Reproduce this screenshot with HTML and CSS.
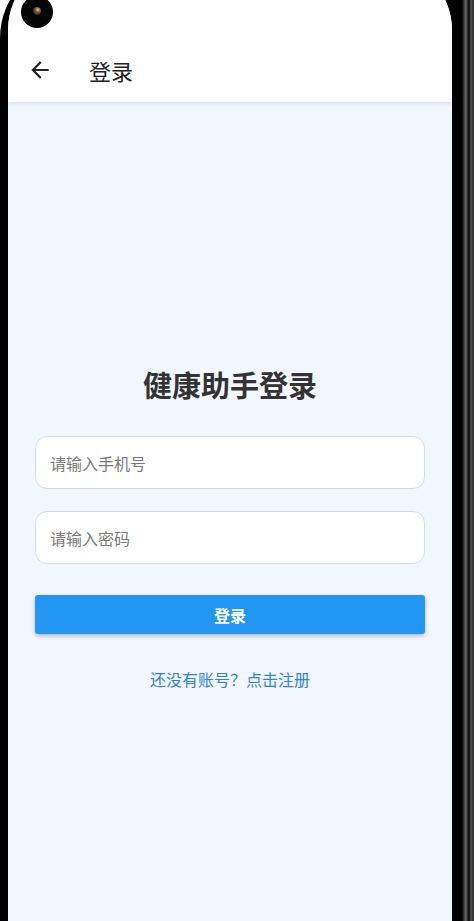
FILE: index.html
```html
<!DOCTYPE html>
<html lang="zh-CN">
<head>
<meta charset="utf-8">
<title>登录</title>
<link rel="stylesheet" href="styles.css">
</head>
<body>
<div class="phone">
  <div class="screen">
    <header class="header">
      <div class="bar">
        <svg class="back" viewBox="0 0 24 24" aria-hidden="true"><path d="M20 11H7.83l5.59-5.59L12 4l-8 8 8 8 1.41-1.41L7.83 13H20v-2z"/></svg>
        <span class="bar-title">登录</span>
      </div>
    </header>
    <main class="content">
      <h1 class="title">健康助手登录</h1>
      <input class="field" type="text" placeholder="请输入手机号">
      <input class="field field-second" type="password" placeholder="请输入密码">
      <button class="btn" type="button">登录</button>
      <a class="link" href="#">还没有账号？点击注册</a>
    </main>
  </div>
  <div class="camera"><div class="lens"></div></div>
</div>
</body>
</html>
```
FILE: styles.css
```css
* { box-sizing: border-box; }
html, body {
  margin: 0;
  padding: 0;
  background: #ffffff;
  overflow: hidden;
  font-family: "Noto Sans CJK SC", "Noto Sans", sans-serif;
}
.phone {
  position: relative;
  margin-top: -39px;
  width: 474px;
  height: 980px;
  padding: 0 22px 0 8px;
  border-top-left-radius: 77px;
  background: linear-gradient(90deg, #000 0, #000 calc(100% - 12px), #3a3a3a calc(100% - 10px), #6a6a6a calc(100% - 8px), #1a1a1a calc(100% - 6px), #0a0a0a calc(100% - 5px), #555 calc(100% - 3px), #222 100%);
}
.screen {
  height: 100%;
  background: #f2f6fe;
  border-radius: 69px 69px 0 0;
  overflow: hidden;
}
.header {
  height: 141px;
  padding-top: 77px;
  background: #ffffff;
  box-shadow: 0 1px 4px rgba(0, 0, 0, 0.12);
  position: relative;
}
.bar {
  height: 64px;
  display: flex;
  align-items: center;
  padding-left: 19px;
}
.back {
  width: 26px;
  height: 26px;
  fill: #222;
}
.bar-title {
  margin-left: 36px;
  font-size: 22px;
  color: #222;
  line-height: 30px;
}
.content {
  display: flex;
  flex-direction: column;
  align-items: center;
  padding-top: 264px;
}
.title {
  margin: 0;
  font-size: 29px;
  font-weight: 700;
  line-height: 36px;
  color: #333;
}
.field {
  margin-top: 34px;
  width: 390px;
  height: 53px;
  border: 1px solid #d6dce4;
  border-radius: 12px;
  background: #fff;
  padding: 0 14px;
  font-family: "Noto Sans CJK SC", "Noto Sans", sans-serif;
  font-size: 16px;
  color: #333;
  outline: none;
}
.field::placeholder { color: #7a7a7a; }
.field-second { margin-top: 22px; }
.btn {
  margin-top: 31px;
  width: 390px;
  height: 39px;
  border: none;
  border-radius: 3px;
  background: #2196f3;
  color: #fff;
  font-family: "Noto Sans CJK SC", "Noto Sans", sans-serif;
  font-size: 16px;
  font-weight: 700;
  box-shadow: 0 2px 4px rgba(0, 0, 0, 0.25);
}
.link {
  margin-top: 33px;
  font-size: 16px;
  line-height: 24px;
  color: #2f82d8;
  text-decoration: none;
}
.camera {
  position: absolute;
  left: 21px;
  top: 35px;
  width: 32px;
  height: 32px;
  border-radius: 50%;
  background: #050505;
}
.lens {
  position: absolute;
  left: 12px;
  top: 11px;
  width: 8px;
  height: 8px;
  border-radius: 50%;
  background: radial-gradient(circle at 60% 35%, #d8c8b8 0, #7a5a48 35%, #2a1e18 80%);
}
```
